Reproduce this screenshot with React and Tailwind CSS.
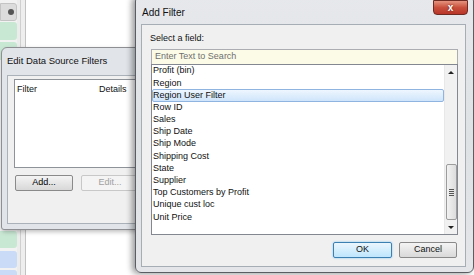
import React from "react";

const items = [
  "Profit (bin)",
  "Region",
  "Region User Filter",
  "Row ID",
  "Sales",
  "Ship Date",
  "Ship Mode",
  "Shipping Cost",
  "State",
  "Supplier",
  "Top Customers by Profit",
  "Unique cust loc",
  "Unit Price",
];

function LeftStrip() {
  return (
    <div className="flex h-full">
      <div className="flex h-full w-[17px] flex-col bg-[#f2f2f2]">
        <div className="mt-[3px] flex h-[18px] items-center justify-center rounded-r-[3px] border border-[#c4c4c4] bg-[#dcdcdc]">
          <div className="ml-[4px] h-[6px] w-[6px] rounded-full bg-[#555]" />
        </div>
        <div className="mt-[1px] h-[18px] rounded-r-[3px] bg-[#c9e8d4]" />
        <div className="mt-[2px] h-[18px] rounded-r-[3px] bg-[#c9e8d4]" />
        <div className="flex-1" />
        <div className="h-[17px] rounded-r-[3px] bg-[#c9e8d4]" />
        <div className="mt-[3px] h-[17px] rounded-r-[3px] bg-[#c9dbf6]" />
        <div className="mt-[2px] mb-[-12px] h-[17px] rounded-r-[3px] bg-[#c9dbf6]" />
      </div>
      <div className="flex h-full w-[9px]">
        <div className="w-[3px] bg-[#ececec]" />
        <div className="w-[1px] bg-[#cfcfcf]" />
        <div className="w-[4px] bg-[#eeeeee]" />
        <div className="w-[1px] bg-[#c2c2c2]" />
      </div>
      <div className="flex-1 bg-white" />
    </div>
  );
}

function EditDialog() {
  return (
    <div className="absolute left-[1px] top-[47px] h-[183px] w-[170px] rounded-t-[6px] rounded-b-[3px] border border-[#8d8f93] bg-[#e1e5ea] shadow-[1px_2px_4px_rgba(0,0,0,0.25)]">
      <div className="flex h-[27px] items-center pl-[5px] text-[9.5px] text-[#111]">
        Edit Data Source Filters
      </div>
      <div className="ml-[5px] h-[149px] border border-[#aab1b8] bg-[#f0f0f0] pl-[6px] pt-[3px]">
        <div className="h-[89px] w-[200px] border border-[#8e939a] bg-white">
          <div className="flex h-[19px] items-center text-[9px] text-[#111]">
            <span className="w-[84px] pl-[2px]">Filter</span>
            <span>Details</span>
          </div>
        </div>
        <div className="mt-[7px] flex gap-[8px] pl-[1px]">
          <div className="flex h-[16px] w-[58px] items-center justify-center rounded-[2px] border border-[#8a8a8a] bg-gradient-to-b from-[#f4f4f4] to-[#d8d8d8] text-[9px]">
            Add...
          </div>
          <div className="flex h-[16px] w-[58px] items-center justify-center rounded-[2px] border border-[#c8c8c8] bg-[#f4f4f4] text-[9px] text-[#a0a0a0]">
            Edit...
          </div>
        </div>
      </div>
    </div>
  );
}

function Scrollbar() {
  return (
    <div className="flex w-[13px] flex-col border-l border-[#e8e8e8] bg-[#f1f1f1]">
      <div className="flex h-[14px] items-center justify-center">
        <div className="h-0 w-0 border-x-[3px] border-b-[3px] border-x-transparent border-b-[#222]" />
      </div>
      <div className="relative flex-1">
        <div className="absolute left-[1px] right-[0px] top-[85px] flex h-[56px] flex-col items-center justify-center gap-[1px] rounded-[2px] border border-[#9c9c9c] bg-gradient-to-r from-[#f2f2f2] to-[#dcdcdc]">
          <div className="h-[1px] w-[5px] bg-[#555]" />
          <div className="h-[1px] w-[5px] bg-[#555]" />
          <div className="h-[1px] w-[5px] bg-[#555]" />
          <div className="h-[1px] w-[5px] bg-[#555]" />
        </div>
      </div>
      <div className="flex h-[14px] items-center justify-center">
        <div className="h-0 w-0 border-x-[3px] border-t-[3px] border-x-transparent border-t-[#222]" />
      </div>
    </div>
  );
}

function AddDialog() {
  return (
    <div className="absolute left-[135px] top-[-5px] flex h-[278px] w-[339px] flex-col rounded-[6px] border border-[#5a5d62] bg-gradient-to-b from-[#e6e8eb] via-[#dfe2e5] to-[#e3e5e8] shadow-[-3px_1px_6px_rgba(0,0,0,0.4)]">
      <div className="relative flex h-[28px] shrink-0 items-center pl-[6px] pt-[5px] text-[10px] text-[#111]">
        Add Filter
        <div className="absolute right-[5px] top-[4px] flex h-[15px] w-[35px] items-center justify-center rounded-b-[4px] border border-[#6f2a22] bg-gradient-to-b from-[#e4937f] via-[#c9503c] to-[#b8352a] text-[10px] font-bold leading-none text-white [text-shadow:0_0_2px_#5a1a12]">
          x
        </div>
      </div>
      <div className="mb-[5px] ml-[5px] mr-[7px] flex-1 border border-[#a6adb5] bg-[#f0f0f0] pl-[9px] pt-[8px] text-[#111]">
        <div className="ml-[-1px] h-[11px] text-[9px] leading-[11px]">Select a field:</div>
        <div className="mt-[5px] flex h-[15px] w-[307px] items-center border border-b-0 border-[#abadb3] bg-[#fcfbe8] pl-[3px] text-[9px] text-[#6f6f6f]">
          Enter Text to Search
        </div>
        <div className="flex h-[171px] w-[307px] border border-[#828790] bg-white">
          <div className="flex-1 text-[9px]">
            {items.map((it) => (
              <div
                key={it}
                className={
                  it === "Region User Filter"
                    ? "flex h-[12.2px] items-center rounded-[2px] border border-[#8fb4e0] bg-gradient-to-b from-[#eef6fe] to-[#cfe5fb] pl-0"
                    : "flex h-[12.2px] items-center pl-[1px]"
                }
              >
                {it}
              </div>
            ))}
          </div>
          <Scrollbar />
        </div>
        <div className="mt-[7px] flex w-[307px] justify-end gap-[7px] pr-[1px]">
          <div className="flex h-[16px] w-[59px] items-center justify-center rounded-[2px] border border-[#3c7fb1] bg-gradient-to-b from-[#eaf6fd] to-[#bee6fd] text-[9px] shadow-[0_0_2px_#6cc0f0]">
            OK
          </div>
          <div className="flex h-[16px] w-[58px] items-center justify-center rounded-[2px] border border-[#8a8a8a] bg-gradient-to-b from-[#f4f4f4] to-[#d9d9d9] text-[9px]">
            Cancel
          </div>
        </div>
      </div>
    </div>
  );
}

export default function App() {
  return (
    <div className="relative h-[275px] w-[474px] overflow-hidden bg-white font-['Liberation_Sans',Arial,sans-serif] text-black">
      <LeftStrip />
      <EditDialog />
      <AddDialog />
    </div>
  );
}
